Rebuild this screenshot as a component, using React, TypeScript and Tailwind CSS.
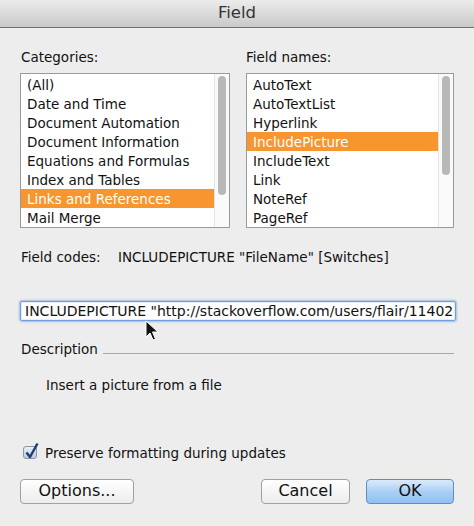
import React from 'react';

const categories = [
  '(All)',
  'Date and Time',
  'Document Automation',
  'Document Information',
  'Equations and Formulas',
  'Index and Tables',
  'Links and References',
  'Mail Merge',
];

const fieldNames = [
  'AutoText',
  'AutoTextList',
  'Hyperlink',
  'IncludePicture',
  'IncludeText',
  'Link',
  'NoteRef',
  'PageRef',
];

interface ListProps {
  items: string[];
  selected: string;
  thumbHeight: string;
}

const ListBox: React.FC<ListProps> = ({ items, selected, thumbHeight }) => (
  <div className="flex h-[155px] border border-[#9a9a9a] bg-white">
    <div className="flex-1 overflow-hidden pt-[1px]">
      {items.map((item) => (
        <div
          key={item}
          className={`h-[19px] pl-[6px] leading-[20px] whitespace-nowrap ${
            item === selected ? 'bg-[#f7962f] text-white' : 'text-[#111]'
          }`}
        >
          {item}
        </div>
      ))}
    </div>
    <div className="w-[15px] border-l border-[#e3e3e3] bg-[#fafafa] pt-[2px] pl-[3px]">
      <div className={`w-[8px] rounded-full bg-[#b8b8b8] ${thumbHeight}`}></div>
    </div>
  </div>
);

const Button: React.FC<{ label: string; width: string; primary?: boolean }> = ({ label, width, primary }) => (
  <div
    className={`flex h-[25px] items-center justify-center rounded-[4px] border text-[16px] ${width} ${
      primary
        ? 'border-[#5d8ccb] bg-gradient-to-b from-[#dcebfb] via-[#a9d0f5] to-[#8fc1f0]'
        : 'border-[#a0a0a0] bg-gradient-to-b from-white to-[#ececec]'
    }`}
  >
    {label}
  </div>
);

export default function App() {
  return (
    <div
      className="relative h-[526px] w-[474px] overflow-hidden bg-[#ededed] text-[13.5px] text-[#111]"
      style={{ fontFamily: '"DejaVu Sans", sans-serif' }}
    >
      <div className="flex h-[28px] items-center justify-center border-b border-[#6f6f6f] bg-gradient-to-b from-[#ececec] to-[#c9c9c9] text-[16.5px] text-[#333]">
        Field
      </div>

      <div className="px-[20px]">
        <div className="mt-[21px] flex gap-[16px]">
          <div className="w-[210px]">
            <div className="mb-[7px] h-[17px] pl-[1px] leading-[17px]">Categories:</div>
            <ListBox items={categories} selected="Links and References" thumbHeight="h-[119px]" />
          </div>
          <div className="w-[208px]">
            <div className="mb-[7px] h-[17px] leading-[17px]">Field names:</div>
            <ListBox items={fieldNames} selected="IncludePicture" thumbHeight="h-[99px]" />
          </div>
        </div>

        <div className="mt-[21px] flex h-[17px] items-center pl-[1px]">
          <span className="w-[97px]">Field codes:</span>
          <span>INCLUDEPICTURE "FileName" [Switches]</span>
        </div>

        <div className="mt-[35px] w-[436px] rounded-[2px] border border-[#6f9fdc] p-[1px] shadow-[0_0_2px_1px_#9cc0ee]">
          <div className="h-[16px] overflow-hidden whitespace-nowrap bg-white pl-[3px] text-[14px] leading-[16px]">
            INCLUDEPICTURE "http://stackoverflow.com/users/flair/1140248.png"
          </div>
        </div>

        <div className="mt-[18px] flex items-center">
          <span className="pl-[1px]">Description</span>
          <div className="ml-[5px] mt-[9px] h-px flex-1 bg-[#a9a9a9]"></div>
        </div>

        <div className="mt-[16px] pl-[26px]">Insert a picture from a file</div>

        <div className="mt-[47px] flex items-center gap-[8px] pl-[3px]">
          <div className="relative h-[13px] w-[14px] rounded-[3px] border border-[#8896a8] bg-gradient-to-b from-[#e9f0f8] to-[#bccbdc]">
            <svg className="absolute -top-[5px] left-[0px]" width="16" height="18" viewBox="0 0 16 18">
              <path d="M2.5 10.5 L6 15 L13.5 1.5" fill="none" stroke="#1f3a73" strokeWidth="2.4" strokeLinejoin="round" />
            </svg>
          </div>
          <span>Preserve formatting during updates</span>
        </div>

        <div className="mt-[16px] flex items-center">
          <Button label="Options..." width="w-[114px]" />
          <div className="flex-1"></div>
          <Button label="Cancel" width="w-[89px]" />
          <div className="w-[16px]"></div>
          <Button label="OK" width="w-[88px]" primary />
        </div>
      </div>

      <svg className="absolute left-[145px] top-[320px]" width="14" height="22" viewBox="0 0 14 22">
        <path d="M1 1 L1 17 L5 13 L8 20 L10.5 19 L7.5 12 L13 12 Z" fill="#111" stroke="#fff" strokeWidth="1" />
      </svg>
    </div>
  );
}
